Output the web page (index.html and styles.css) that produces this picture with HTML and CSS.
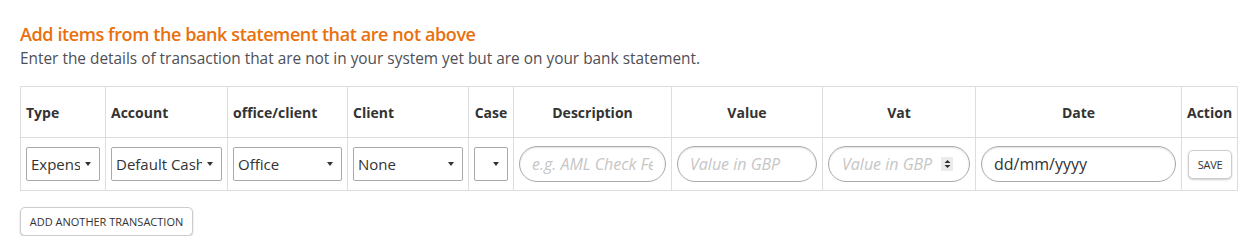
FILE: index.html
```html
<!DOCTYPE html>
<html>
<head>
<meta charset="utf-8">
<link rel="stylesheet" href="styles.css">
</head>
<body>
<div class="panel">
  <h3 class="title">Add items from the bank statement that are not above</h3>
  <p class="intro">Enter the details of transaction that are not in your system yet but are on your bank statement.</p>
  <table class="tx">
    <colgroup>
      <col class="c-type"><col class="c-account"><col class="c-office"><col class="c-client"><col class="c-case"><col class="c-desc"><col class="c-value"><col class="c-vat"><col class="c-date"><col class="c-action">
    </colgroup>
    <thead>
      <tr>
        <th>Type</th>
        <th>Account</th>
        <th>office/client</th>
        <th>Client</th>
        <th class="ctr">Case</th>
        <th class="ctr">Description</th>
        <th class="ctr">Value</th>
        <th class="ctr">Vat</th>
        <th class="ctr">Date</th>
        <th class="ctr">Action</th>
      </tr>
    </thead>
    <tbody>
      <tr>
        <td><div class="sel"><span class="sel-text">Expens</span></div></td>
        <td><div class="sel"><span class="sel-text">Default Cash</span></div></td>
        <td><div class="sel"><span class="sel-text">Office</span></div></td>
        <td><div class="sel"><span class="sel-text">None</span></div></td>
        <td><div class="sel"><span class="sel-text"></span></div></td>
        <td><input class="pill" type="text" placeholder="e.g. AML Check Fee"></td>
        <td><input class="pill" type="text" placeholder="Value in GBP"></td>
        <td><div class="pill pill-num"><input class="bare" type="text" placeholder="Value in GBP"><span class="spin"><svg width="7" height="10" viewBox="0 0 7 10"><path d="M3.5 1 L6.5 4 H0.5 Z M3.5 9 L6.5 6 H0.5 Z" fill="#333"/></svg></span></div></td>
        <td><input class="pill date" type="text" value="dd/mm/yyyy"></td>
        <td><button class="btn btn-save">SAVE</button></td>
      </tr>
    </tbody>
  </table>
  <button class="btn btn-add">ADD ANOTHER TRANSACTION</button>
</div>
</body>
</html>
```
FILE: styles.css
```css
html, body {
  margin: 0;
  padding: 0;
  background: #fff;
}
body {
  font-family: "Open Sans", "DejaVu Sans", sans-serif;
  color: #333;
}
.panel {
  padding: 22px 18px 0 20px;
}
.title {
  margin: 0;
  font-size: 18px;
  font-weight: 600;
  line-height: 24px;
  color: #e9700d;
  letter-spacing: -0.4px;
}
.intro {
  margin: 0 0 15px 0;
  font-size: 15.4px;
  line-height: 25px;
  color: #4f4f55;
}
.tx {
  border-collapse: collapse;
  table-layout: fixed;
  width: 1217px;
}
.c-type { width: 85px; }
.c-account { width: 122px; }
.c-office { width: 120px; }
.c-client { width: 121px; }
.c-case { width: 45px; }
.c-desc { width: 158px; }
.c-value { width: 151px; }
.c-vat { width: 153px; }
.c-date { width: 206px; }
.c-action { width: 56px; }
.tx th, .tx td {
  border: 1px solid #ddd;
  padding: 8px 5px 8px 5px;
  vertical-align: middle;
}
.tx th {
  height: 34px;
  text-align: left;
  font-size: 14px;
  font-weight: 700;
  color: #333;
  white-space: nowrap;
  overflow: hidden;
}
.tx th.ctr {
  text-align: center;
}
.tx td {
  height: 34px;
}
.sel {
  position: relative;
  box-sizing: border-box;
  height: 34px;
  border: 1px solid #aaa;
  border-radius: 2px;
  background: #fff;
  padding: 0 19px 0 4px;
  display: flex;
  align-items: center;
  overflow: hidden;
}
.sel-text {
  font-size: 15px;
  color: #333;
  white-space: nowrap;
  overflow: hidden;
}
.sel::after {
  content: "";
  position: absolute;
  right: 8px;
  top: 14px;
  border-left: 3px solid transparent;
  border-right: 3px solid transparent;
  border-top: 4px solid #333;
}
.pill {
  box-sizing: border-box;
  width: 100%;
  height: 36px;
  border: 1px solid #aaa;
  border-radius: 18px;
  padding: 0 12px;
  font-family: "Open Sans", "DejaVu Sans", sans-serif;
  font-size: 16px;
  color: #333;
  background: #fff;
  box-shadow: inset 0 1px 2px rgba(0,0,0,0.12);
  outline: none;
  display: block;
}
.pill::placeholder, .bare::placeholder {
  color: #c6c6c6;
  font-style: italic;
}
.pill-num {
  display: flex;
  align-items: center;
  padding: 0 16px 0 13px;
  gap: 4px;
}
.bare {
  flex: 1;
  min-width: 0;
  border: 0;
  padding: 0;
  background: transparent;
  font-family: "Open Sans", "DejaVu Sans", sans-serif;
  font-size: 16px;
  outline: none;
}
.spin {
  width: 12px;
  height: 14px;
  background: #ececec;
  display: flex;
  align-items: center;
  justify-content: center;
}
.date {
  color: #333;
  padding-left: 12px;
}
.btn {
  font-family: "Open Sans", "DejaVu Sans", sans-serif;
  background: #fff;
  border: 1px solid #ccc;
  border-radius: 5px;
  color: #333;
  box-shadow: 0 1px 2px rgba(0,0,0,0.2);
  cursor: pointer;
}
.btn-save {
  display: block;
  width: 44px;
  height: 29px;
  padding: 0;
  font-size: 11px;
  letter-spacing: -0.3px;
  margin-left: 1px;
}
.btn-add {
  margin-top: 16px;
  height: 29px;
  width: 173px;
  padding: 0;
  font-size: 11px;
}
```
